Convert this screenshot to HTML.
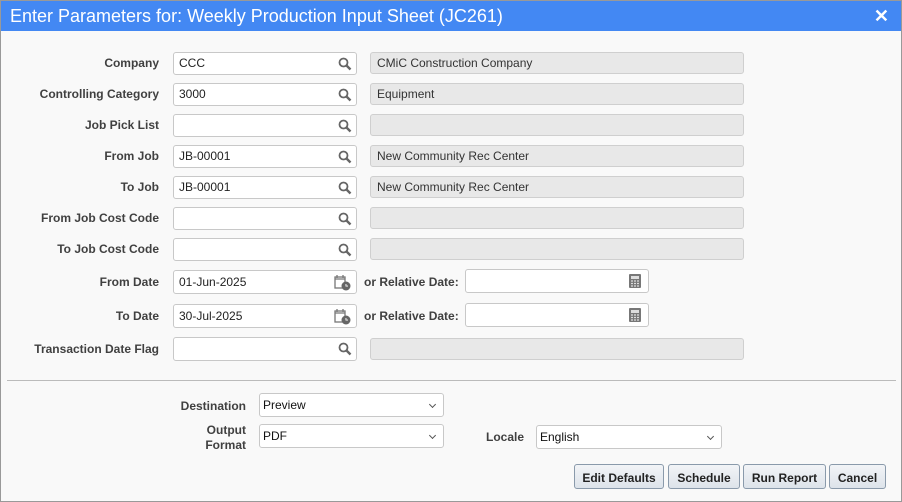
<!DOCTYPE html><html><head><style>
*{box-sizing:border-box;margin:0;padding:0}
body{width:902px;height:502px;background:#f9f9f9;font-family:"Liberation Sans",Arial,sans-serif;position:relative;overflow:hidden}
.frame{position:absolute;left:0;top:0;width:902px;height:502px;border:1px solid #999}
.title{position:absolute;left:1px;top:1px;width:900px;height:30px;background:#4388f3;color:#fff;font-size:18px;line-height:30px;padding-left:9px}
.x{position:absolute;right:12px;top:0;font-size:18px;font-weight:bold}
.lbl{position:absolute;right:743px;font-size:12px;font-weight:bold;color:#404040;text-align:right;white-space:nowrap}
.in{position:absolute;left:173px;width:184px;height:23px;background:#fff;border:1px solid #c8c8c8;border-radius:3px;font-size:12px;color:#222;padding:4px 5px;line-height:13px}
.ro{position:absolute;left:370px;width:374px;height:22px;background:#e8e8e8;border:1px solid #cfcfcf;border-radius:3px;font-size:12px;color:#333;padding:4px 6px;line-height:13px}
.ic{position:absolute;right:4px;top:4px}
.rl{position:absolute;left:364px;font-size:12px;font-weight:bold;color:#404040}
.rel{position:absolute;left:465px;width:184px;height:24px;background:#fff;border:1px solid #c8c8c8;border-radius:3px}
.sel{position:absolute;height:24px;background:#fff;border:1px solid #c8c8c8;border-radius:3px;font-size:12px;padding:5px 3px;line-height:13px;color:#111}
.sel:after{content:"";position:absolute;right:8px;top:8px;width:4px;height:4px;border-right:1px solid #555;border-bottom:1px solid #555;transform:rotate(45deg)}
.bl{position:absolute;font-size:12px;font-weight:bold;color:#404040;text-align:right}
.btn{position:absolute;top:464px;height:25px;background:linear-gradient(#f2f4f7,#dde3ea);border:1px solid #8a9aab;border-radius:3px;font-size:12px;font-weight:bold;color:#222;text-align:center;line-height:26px}
</style></head><body>
<div class="frame"></div>
<div class="title">Enter Parameters for: Weekly Production Input Sheet (JC261)<span class="x">✕</span></div>

<div class="lbl" style="top:56px">Company</div>
<div class="in" style="top:52px">CCC<svg class="ic" width="14" height="14" viewBox="0 0 14 14"><circle cx="5.5" cy="5.5" r="4" fill="none" stroke="#666" stroke-width="1.8"/><path d="M8.5 8.5L12.5 12.5" stroke="#666" stroke-width="2.4"/></svg></div>
<div class="ro" style="top:52px">CMiC Construction Company</div>

<div class="lbl" style="top:87px">Controlling Category</div>
<div class="in" style="top:83px">3000<svg class="ic" width="14" height="14" viewBox="0 0 14 14"><circle cx="5.5" cy="5.5" r="4" fill="none" stroke="#666" stroke-width="1.8"/><path d="M8.5 8.5L12.5 12.5" stroke="#666" stroke-width="2.4"/></svg></div>
<div class="ro" style="top:83px">Equipment</div>

<div class="lbl" style="top:118px">Job Pick List</div>
<div class="in" style="top:114px"><svg class="ic" width="14" height="14" viewBox="0 0 14 14"><circle cx="5.5" cy="5.5" r="4" fill="none" stroke="#666" stroke-width="1.8"/><path d="M8.5 8.5L12.5 12.5" stroke="#666" stroke-width="2.4"/></svg></div>
<div class="ro" style="top:114px"></div>

<div class="lbl" style="top:149px">From Job</div>
<div class="in" style="top:145px">JB-00001<svg class="ic" width="14" height="14" viewBox="0 0 14 14"><circle cx="5.5" cy="5.5" r="4" fill="none" stroke="#666" stroke-width="1.8"/><path d="M8.5 8.5L12.5 12.5" stroke="#666" stroke-width="2.4"/></svg></div>
<div class="ro" style="top:145px">New Community Rec Center</div>

<div class="lbl" style="top:180px">To Job</div>
<div class="in" style="top:176px">JB-00001<svg class="ic" width="14" height="14" viewBox="0 0 14 14"><circle cx="5.5" cy="5.5" r="4" fill="none" stroke="#666" stroke-width="1.8"/><path d="M8.5 8.5L12.5 12.5" stroke="#666" stroke-width="2.4"/></svg></div>
<div class="ro" style="top:176px">New Community Rec Center</div>

<div class="lbl" style="top:211px">From Job Cost Code</div>
<div class="in" style="top:207px"><svg class="ic" width="14" height="14" viewBox="0 0 14 14"><circle cx="5.5" cy="5.5" r="4" fill="none" stroke="#666" stroke-width="1.8"/><path d="M8.5 8.5L12.5 12.5" stroke="#666" stroke-width="2.4"/></svg></div>
<div class="ro" style="top:207px"></div>

<div class="lbl" style="top:242px">To Job Cost Code</div>
<div class="in" style="top:238px"><svg class="ic" width="14" height="14" viewBox="0 0 14 14"><circle cx="5.5" cy="5.5" r="4" fill="none" stroke="#666" stroke-width="1.8"/><path d="M8.5 8.5L12.5 12.5" stroke="#666" stroke-width="2.4"/></svg></div>
<div class="ro" style="top:238px"></div>

<div class="lbl" style="top:275px">From Date</div>
<div class="in" style="top:270px;height:24px;padding-top:5px">01-Jun-2025<svg class="ic" width="17" height="17" viewBox="0 0 17 17" style="top:3px;right:5px"><rect x="1" y="3" width="10" height="11" fill="none" stroke="#777" stroke-width="1.3"/><path d="M3 1v3M9 1v3M1 5h10" stroke="#777" stroke-width="1.3"/><circle cx="12" cy="12" r="4.5" fill="#666"/><path d="M12 10v2h2" stroke="#fff" stroke-width="1"/></svg></div>
<div class="rl" style="top:275px">or Relative Date:</div>
<div class="rel" style="top:269px"><svg class="ic" width="12" height="14" viewBox="0 0 12 14" style="top:4px;right:7px"><rect x="0" y="0" width="12" height="14" rx="1" fill="#777"/><rect x="2" y="2" width="8" height="3" fill="#ddd"/><path d="M2 7h2M5 7h2M8 7h2M2 9.5h2M5 9.5h2M8 9.5h2M2 12h2M5 12h2M8 12h2" stroke="#ddd" stroke-width="1.3"/></svg></div>

<div class="lbl" style="top:309px">To Date</div>
<div class="in" style="top:304px;height:24px;padding-top:5px">30-Jul-2025<svg class="ic" width="17" height="17" viewBox="0 0 17 17" style="top:3px;right:5px"><rect x="1" y="3" width="10" height="11" fill="none" stroke="#777" stroke-width="1.3"/><path d="M3 1v3M9 1v3M1 5h10" stroke="#777" stroke-width="1.3"/><circle cx="12" cy="12" r="4.5" fill="#666"/><path d="M12 10v2h2" stroke="#fff" stroke-width="1"/></svg></div>
<div class="rl" style="top:309px">or Relative Date:</div>
<div class="rel" style="top:303px"><svg class="ic" width="12" height="14" viewBox="0 0 12 14" style="top:4px;right:7px"><rect x="0" y="0" width="12" height="14" rx="1" fill="#777"/><rect x="2" y="2" width="8" height="3" fill="#ddd"/><path d="M2 7h2M5 7h2M8 7h2M2 9.5h2M5 9.5h2M8 9.5h2M2 12h2M5 12h2M8 12h2" stroke="#ddd" stroke-width="1.3"/></svg></div>

<div class="lbl" style="top:342px">Transaction Date Flag</div>
<div class="in" style="top:337px;height:24px"><svg class="ic" width="14" height="14" viewBox="0 0 14 14"><circle cx="5.5" cy="5.5" r="4" fill="none" stroke="#666" stroke-width="1.8"/><path d="M8.5 8.5L12.5 12.5" stroke="#666" stroke-width="2.4"/></svg></div>
<div class="ro" style="top:338px"></div>

<div style="position:absolute;left:7px;top:380px;width:889px;height:1px;background:#bbb"></div>

<div class="bl" style="left:170px;width:76px;top:399px">Destination</div>
<div class="sel" style="left:259px;top:393px;width:185px">Preview</div>
<div class="bl" style="left:170px;width:76px;top:423px;line-height:15px">Output<br>Format</div>
<div class="sel" style="left:259px;top:424px;width:185px">PDF</div>
<div class="bl" style="left:480px;width:44px;top:430px">Locale</div>
<div class="sel" style="left:536px;top:425px;width:186px">English</div>

<div class="btn" style="left:574px;width:90px">Edit Defaults</div>
<div class="btn" style="left:668px;width:72px">Schedule</div>
<div class="btn" style="left:743px;width:83px">Run Report</div>
<div class="btn" style="left:829px;width:57px">Cancel</div>
</body></html>
